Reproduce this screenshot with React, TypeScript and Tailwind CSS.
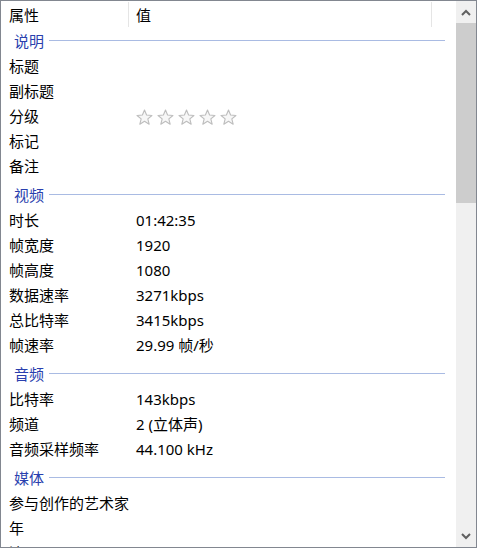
import React from "react";

type Row = { name: string; value?: string; stars?: boolean };
type Group = { title: string; rows: Row[] };

const groups: Group[] = [
  {
    title: "说明",
    rows: [
      { name: "标题" },
      { name: "副标题" },
      { name: "分级", stars: true },
      { name: "标记" },
      { name: "备注" },
    ],
  },
  {
    title: "视频",
    rows: [
      { name: "时长", value: "01:42:35" },
      { name: "帧宽度", value: "1920" },
      { name: "帧高度", value: "1080" },
      { name: "数据速率", value: "3271kbps" },
      { name: "总比特率", value: "3415kbps" },
      { name: "帧速率", value: "29.99 帧/秒" },
    ],
  },
  {
    title: "音频",
    rows: [
      { name: "比特率", value: "143kbps" },
      { name: "频道", value: "2 (立体声)" },
      { name: "音频采样频率", value: "44.100 kHz" },
    ],
  },
  {
    title: "媒体",
    rows: [{ name: "参与创作的艺术家" }, { name: "年" }, { name: "流派" }, { name: "导演" }],
  },
];

function Star() {
  return (
    <svg width="17" height="16" viewBox="0 0 24 23" className="shrink-0">
      <path
        d="M12 1.5l3 7.2 7.7.6-5.9 5 1.9 7.5L12 17.7l-6.7 4.1 1.9-7.5-5.9-5 7.7-.6z"
        fill="#f7f7f7"
        stroke="#bdbdbd"
        strokeWidth="1.6"
        strokeLinejoin="round"
      />
    </svg>
  );
}

function Chevron({ up }: { up?: boolean }) {
  return (
    <svg width="10" height="7" viewBox="0 0 10 7">
      <path
        d={up ? "M1 6L5 2l4 4" : "M1 1l4 4 4-4"}
        fill="none"
        stroke="#606060"
        strokeWidth="2"
      />
    </svg>
  );
}

export default function App() {
  return (
    <div
      className="flex h-[548px] w-[477px] border border-[#828790] bg-white text-[15px] text-black"
      style={{ fontFamily: '"Noto Sans", "Noto Sans CJK SC", sans-serif' }}
    >
      <div className="flex min-w-0 flex-1 flex-col overflow-hidden">
        {/* column header */}
        <div className="flex h-[27px] shrink-0 items-center">
          <div className="flex h-[25px] w-[128px] items-center border-r border-[#e5e5e5] pl-[8px] pt-[2px]">属性</div>
          <div className="flex h-[25px] w-[303px] items-center border-r border-[#e5e5e5] pl-[7px] pt-[2px]">值</div>
        </div>

        {groups.map((g, gi) => (
          <div key={g.title}>
            <div className={`flex h-[25px] items-center pl-[13px] pr-[11px] ${gi > 0 ? "mt-[4px]" : ""}`}>
              <span className="pt-[2px] text-[#2a3fae]">{g.title}</span>
              <div className="ml-[5px] h-px flex-1 bg-[#a9bbe3]" />
            </div>
            {g.rows.map((r) => (
              <div key={r.name} className="flex h-[25px] items-center pt-[2px]">
                <div className="w-[128px] shrink-0 whitespace-nowrap pl-[8px]">{r.name}</div>
                <div className="flex items-center pl-[7px]">
                  {r.stars ? (
                    <div className="flex gap-[4px]">
                      <Star />
                      <Star />
                      <Star />
                      <Star />
                      <Star />
                    </div>
                  ) : (
                    r.value
                  )}
                </div>
              </div>
            ))}
          </div>
        ))}
      </div>

      {/* scrollbar */}
      <div className="flex w-[20px] shrink-0 flex-col bg-[#f0f0f0]">
        <div className="flex h-[22px] items-center justify-center">
          <Chevron up />
        </div>
        <div className="h-[180px] bg-[#cdcdcd]" />
        <div className="flex-1" />
        <div className="flex h-[22px] items-center justify-center">
          <Chevron />
        </div>
      </div>
    </div>
  );
}
